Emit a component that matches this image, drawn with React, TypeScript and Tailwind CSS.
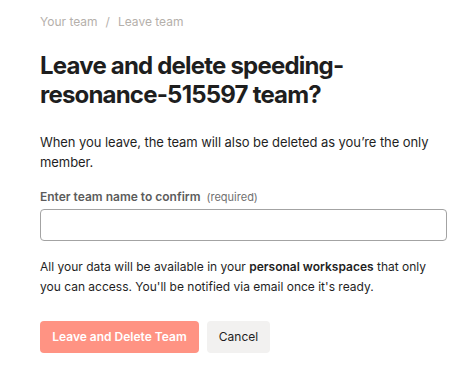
import React from "react";

export default function App() {
  return (
    <div className="min-h-[390px] bg-white pl-10 pr-[27px] pt-[14px] text-[#1f1f1f]" style={{ fontFamily: "Inter, 'Noto Sans', sans-serif" }}>
      <nav className="flex items-center gap-2 text-[12px] leading-[16px] text-[#b5b0ab]">
        <span>Your team</span>
        <span>/</span>
        <span>Leave team</span>
      </nav>
      <h1 className="mt-[21px] w-[330px] text-[24px] font-bold leading-[29px] tracking-[-0.8px] text-[#1e1e1e]">
        Leave and delete speeding-resonance-515597 team?
      </h1>
      <p className="mt-[23px] text-[13px] leading-[20px] tracking-[-0.07px] text-[#1f1f1f]">
        When you leave, the team will also be deleted as you’re the only member.
      </p>
      <div className="mt-[17px] flex items-baseline gap-[6px] leading-[16px]">
        <span className="text-[12px] font-semibold text-[#5c5c5c]">Enter team name to confirm</span>
        <span className="text-[11px] text-[#707070]">(required)</span>
      </div>
      <input className="mt-[4px] block h-[32px] w-full rounded-[4px] border border-[#a3a3a3] bg-white px-2 text-[13px] outline-none" />
      <p className="mt-[16px] text-[12px] leading-[20px] text-[#1f1f1f]">
        All your data will be available in your <span className="font-semibold">personal workspaces</span> that only you can access. You'll be notified via email once it's ready.
      </p>
      <div className="mt-[24px] flex gap-2">
        <button className="h-[32px] w-[159px] rounded-[4px] bg-[#ff9383] text-[12px] font-semibold text-white">
          Leave and Delete Team
        </button>
        <button className="h-[32px] w-[63px] rounded-[4px] bg-[#f2f1f0] text-[12px] text-[#1f1f1f]">
          Cancel
        </button>
      </div>
    </div>
  );
}
